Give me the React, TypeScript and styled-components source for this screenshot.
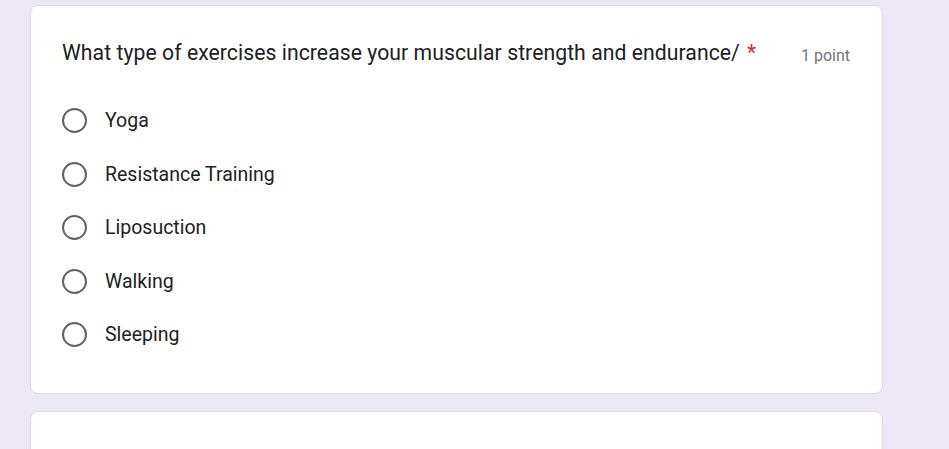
import React from "react";
import styled, { createGlobalStyle } from "styled-components";

const GlobalStyle = createGlobalStyle`
  html, body {
    margin: 0;
    padding: 0;
    background: #ede7f6;
    font-family: Roboto, "Liberation Sans", Arial, sans-serif;
    overflow: hidden;
  }
`;

const Page = styled.div`
  display: flex;
  flex-direction: column;
  gap: 17px;
  padding: 5px 0 0 30px;
  width: 853px;
`;

const Card = styled.div<{ $height?: number }>`
  background: white;
  border: 1px solid #dadce0;
  border-radius: 8px;
  padding: 24px 32px 42px 31px;
  min-height: ${(p) => (p.$height ? `${p.$height}px` : "auto")};
  box-sizing: border-box;
`;

const Header = styled.div`
  display: flex;
  justify-content: space-between;
  align-items: flex-start;
  padding-top: 9px;
`;

const Title = styled.div`
  font-size: 21.2px;
  line-height: 28px;
  color: #202124;
  letter-spacing: 0.05px;
`;

const Star = styled.span`
  color: #d93025;
  margin-left: 7px;
`;

const Points = styled.div`
  font-size: 16px;
  color: #70757a;
  line-height: 28px;
  padding-top: 3px;
`;

const Options = styled.ul`
  list-style: none;
  margin: 34px 0 0;
  padding: 0;
  display: flex;
  flex-direction: column;
  gap: 20.5px;
`;

const Option = styled.li`
  display: flex;
  align-items: center;
  gap: 18px;
  height: 33px;
`;

const Radio = styled.span`
  width: 21px;
  height: 21px;
  border: 2.5px solid #5f6368;
  border-radius: 50%;
  flex-shrink: 0;
`;

const Label = styled.span`
  font-size: 19.5px;
  color: #202124;
`;

const options = ["Yoga", "Resistance Training", "Liposuction", "Walking", "Sleeping"];

const App = () => {
  return (
    <>
      <GlobalStyle />
      <Page>
        <Card>
          <Header>
            <Title>
              What type of exercises increase your muscular strength and endurance/
              <Star>*</Star>
            </Title>
            <Points>1 point</Points>
          </Header>
          <Options>
            {options.map((o) => (
              <Option key={o}>
                <Radio />
                <Label>{o}</Label>
              </Option>
            ))}
          </Options>
        </Card>
        <Card $height={38} />
      </Page>
    </>
  );
};

export default App;
